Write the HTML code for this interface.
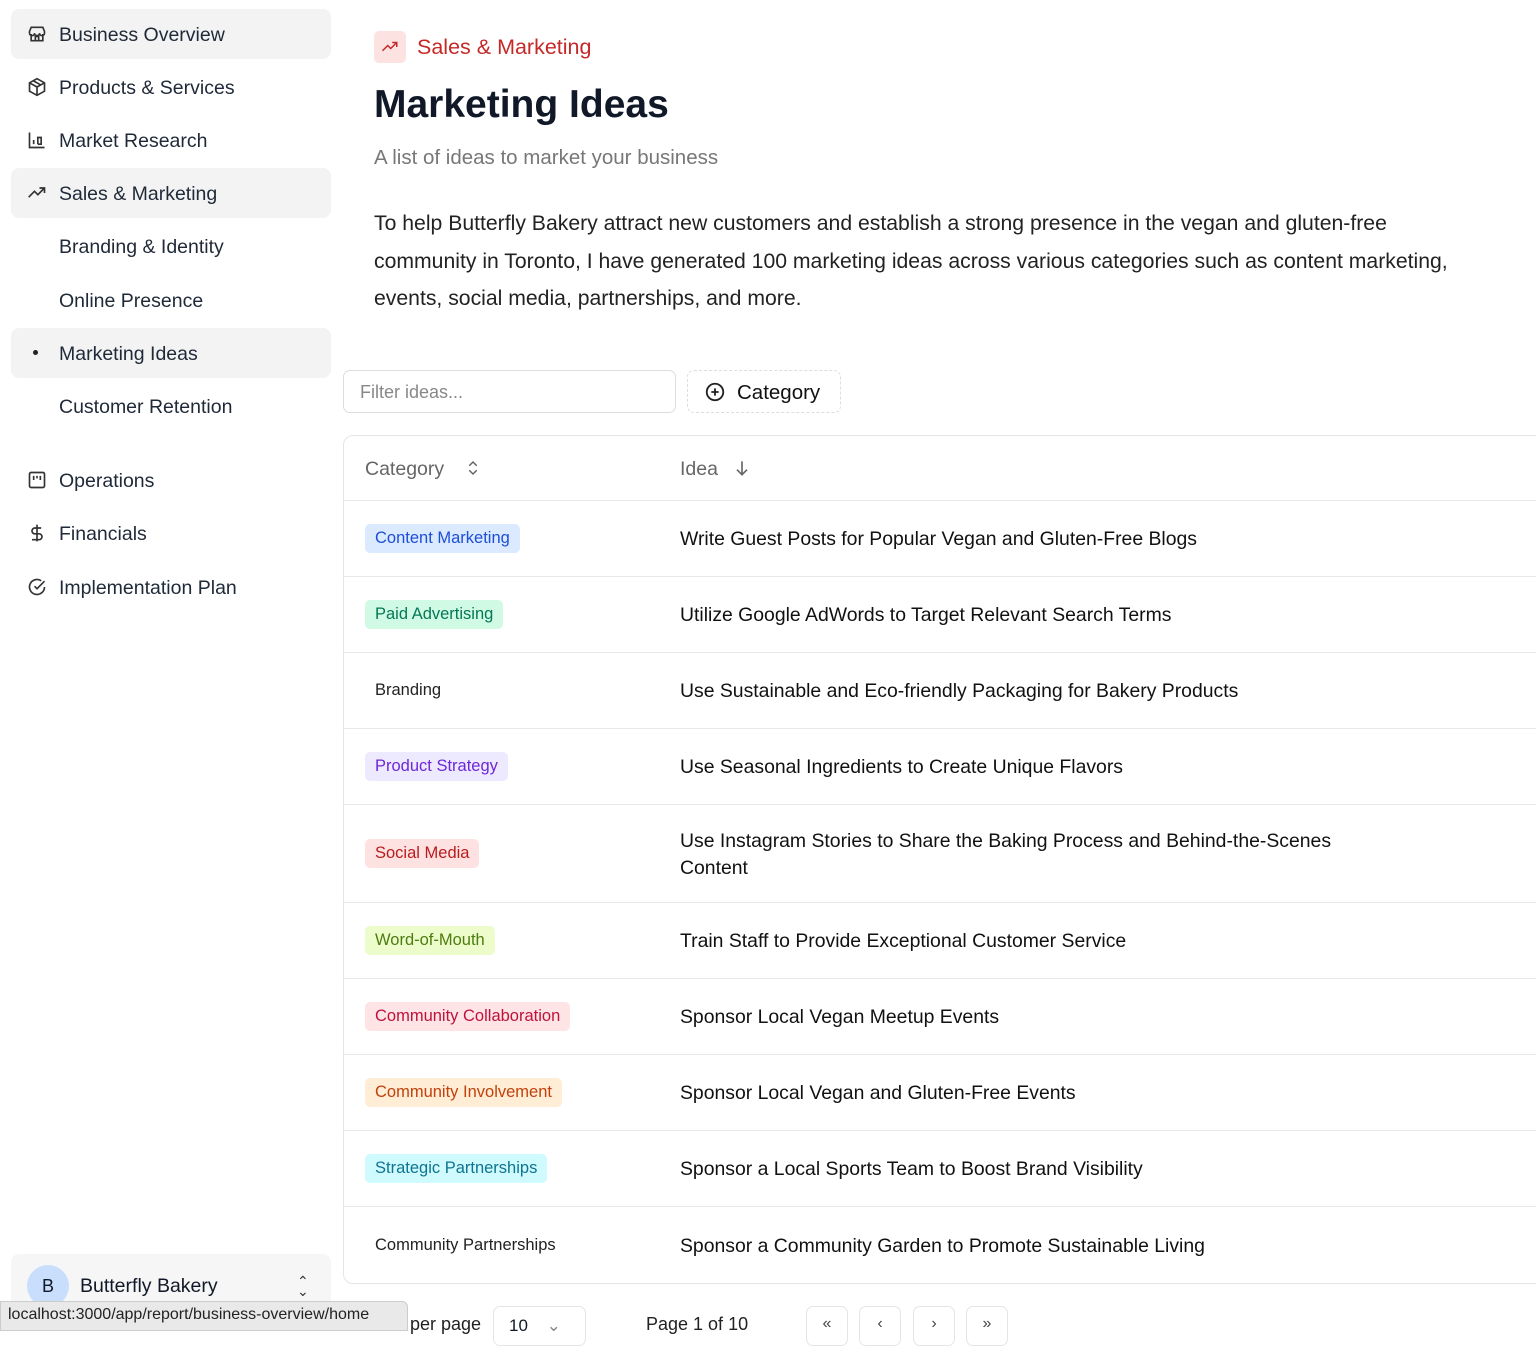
<!DOCTYPE html>
<html><head><meta charset="utf-8"><style>
*{box-sizing:border-box;margin:0;padding:0}
body{width:1536px;height:1329px;overflow:hidden;background:#fff;font-family:"Liberation Sans",sans-serif;color:#111827;position:relative}
.a{position:absolute}
.nav{position:absolute;left:11px;width:320px;height:50px;border-radius:8px;font-size:19.5px;color:#1f2937;display:flex;align-items:center;padding-left:48px;padding-top:3px}
.nav.hl{background:#f3f3f3}
.nav svg{position:absolute;left:16px;top:15px}
.row{position:absolute;left:343px;width:1200px;border-top:1px solid #e8e8e8;display:flex;align-items:center}
.cat{position:absolute;left:22px;font-size:16.5px;padding:5px 10px;border-radius:5px}
.idea{position:absolute;left:337px;font-size:19.4px;color:#111;line-height:27px;padding-top:2px}
.pg{position:absolute;top:1306px;width:42px;height:40px;border:1px solid #e5e5e5;border-radius:7px;text-align:center;font-size:16px;color:#444;padding-top:8px}
</style></head><body>

<div class="nav hl" style="top:9px"><svg width="20" height="20" viewBox="0 0 24 24" fill="none" stroke="#333" stroke-width="2"><path d="M3 9l2-5h14l2 5v2a3 3 0 01-6 0 3 3 0 01-6 0 3 3 0 01-6 0zM5 12v8h14v-8M10 20v-5h4v5"/></svg>Business Overview</div>
<div class="nav" style="top:62px"><svg width="20" height="20" viewBox="0 0 24 24" fill="none" stroke="#333" stroke-width="2"><path d="M12 2l9 5v10l-9 5-9-5V7zM3 7l9 5 9-5M12 12v10M7.5 4.5l9 5"/></svg>Products &amp; Services</div>
<div class="nav" style="top:115px"><svg width="20" height="20" viewBox="0 0 24 24" fill="none" stroke="#333" stroke-width="2"><path d="M3 3v18h18M8 17v-5M13 17V9h4v8h-4"/></svg>Market Research</div>
<div class="nav hl" style="top:168px"><svg width="20" height="20" viewBox="0 0 24 24" fill="none" stroke="#333" stroke-width="2"><path d="M2 17l7-7 4 4 8-8M15 6h6v6"/></svg>Sales &amp; Marketing</div>
<div class="nav" style="top:221px">Branding &amp; Identity</div>
<div class="nav" style="top:275px">Online Presence</div>
<div class="nav hl" style="top:328px"><span class="a" style="left:22px;top:22px;width:5px;height:5px;border-radius:50%;background:#222"></span>Marketing Ideas</div>
<div class="nav" style="top:381px">Customer Retention</div>
<div class="nav" style="top:455px"><svg width="20" height="20" viewBox="0 0 24 24" fill="none" stroke="#333" stroke-width="2"><rect x="3" y="3" width="18" height="18" rx="2"/><path d="M8 7v5M12 7v3M16 7v5"/></svg>Operations</div>
<div class="nav" style="top:508px"><svg width="20" height="20" viewBox="0 0 24 24" fill="none" stroke="#333" stroke-width="2"><path d="M12 2v20M17 6H9.5a3.5 3.5 0 000 7h5a3.5 3.5 0 010 7H6"/></svg>Financials</div>
<div class="nav" style="top:562px"><svg width="20" height="20" viewBox="0 0 24 24" fill="none" stroke="#333" stroke-width="2"><path d="M21 12a9 9 0 11-4-7.5M9 11l3 3 9-9"/></svg>Implementation Plan</div>

<div class="a" style="left:11px;top:1254px;width:320px;height:64px;background:#f6f6f6;border-radius:8px"></div>
<div class="a" style="left:27px;top:1265px;width:42px;height:42px;border-radius:50%;background:#c9defc;font-size:18px;text-align:center;padding-top:11px">B</div>
<div class="a" style="left:80px;top:1275px;font-size:19.5px">Butterfly Bakery</div>
<div class="a" style="left:297px;top:1276px;font-size:14px;line-height:10px;color:#333">⌃<br>⌄</div>
<div class="a" style="left:0;top:1301px;width:408px;height:30px;background:#e9e9e9;border:1px solid #ccc;border-radius:0 6px 0 0;font-size:16px;color:#222;padding:4px 7px">localhost:3000/app/report/business-overview/home</div>

<div class="a" style="left:374px;top:31px;width:32px;height:32px;background:#fde2e2;border-radius:5px"><svg class="a" style="left:7px;top:7px" width="18" height="18" viewBox="0 0 24 24" fill="none" stroke="#c62828" stroke-width="2"><path d="M2 17l7-7 4 4 8-8M15 6h6v6"/></svg></div>
<div class="a" style="left:417px;top:35px;font-size:21.5px;color:#c62828">Sales &amp; Marketing</div>
<div class="a" style="left:374px;top:83px;font-size:39px;font-weight:bold;color:#111827">Marketing Ideas</div>
<div class="a" style="left:374px;top:146px;font-size:20.5px;color:#777">A list of ideas to market your business</div>
<div class="a" style="left:374px;top:205px;width:1090px;font-size:21.2px;line-height:37.5px;color:#222">To help Butterfly Bakery attract new customers and establish a strong presence in the vegan and gluten-free community in Toronto, I have generated 100 marketing ideas across various categories such as content marketing, events, social media, partnerships, and more.</div>

<div class="a" style="left:343px;top:370px;width:333px;height:43px;border:1px solid #ddd;border-radius:7px;font-size:18px;color:#888;padding:11px 16px">Filter ideas...</div>
<div class="a" style="left:687px;top:370px;width:154px;height:43px;border:1px dashed #ddd;border-radius:7px;font-size:20.5px;color:#111;padding:10px 0 0 49px">Category<svg class="a" style="left:16px;top:10px" width="22" height="22" viewBox="0 0 24 24" fill="none" stroke="#222" stroke-width="2"><circle cx="12" cy="12" r="9"/><path d="M12 8v8M8 12h8"/></svg></div>

<div class="a" style="left:343px;top:435px;width:1210px;height:849px;border:1px solid #e5e5e5;border-radius:10px"></div>
<div class="a" style="left:365px;top:458px;font-size:19.5px;color:#666">Category</div>
<svg class="a" style="left:464px;top:458px" width="18" height="20" viewBox="0 0 24 24" fill="none" stroke="#666" stroke-width="2"><path d="M7 9l5-5 5 5M7 15l5 5 5-5"/></svg>
<div class="a" style="left:680px;top:458px;font-size:19.5px;color:#666">Idea</div>
<svg class="a" style="left:732px;top:458px" width="20" height="20" viewBox="0 0 24 24" fill="none" stroke="#666" stroke-width="2"><path d="M12 4v16M6 14l6 6 6-6"/></svg>

<div class="row" style="top:500px;height:76px"><span class="cat" style="background:#dbeafe;color:#1d4ed8">Content Marketing</span><span class="idea">Write Guest Posts for Popular Vegan and Gluten-Free Blogs</span></div>
<div class="row" style="top:576px;height:76px"><span class="cat" style="background:#d1fae5;color:#047857">Paid Advertising</span><span class="idea">Utilize Google AdWords to Target Relevant Search Terms</span></div>
<div class="row" style="top:652px;height:76px"><span class="cat" style="color:#222">Branding</span><span class="idea">Use Sustainable and Eco-friendly Packaging for Bakery Products</span></div>
<div class="row" style="top:728px;height:76px"><span class="cat" style="background:#ede9fe;color:#6d28d9">Product Strategy</span><span class="idea">Use Seasonal Ingredients to Create Unique Flavors</span></div>
<div class="row" style="top:804px;height:98px"><span class="cat" style="background:#fee2e2;color:#b91c1c">Social Media</span><span class="idea">Use Instagram Stories to Share the Baking Process and Behind-the-Scenes<br>Content</span></div>
<div class="row" style="top:902px;height:76px"><span class="cat" style="background:#ecfccb;color:#4d7c0f">Word-of-Mouth</span><span class="idea">Train Staff to Provide Exceptional Customer Service</span></div>
<div class="row" style="top:978px;height:76px"><span class="cat" style="background:#ffe4e6;color:#be123c">Community Collaboration</span><span class="idea">Sponsor Local Vegan Meetup Events</span></div>
<div class="row" style="top:1054px;height:76px"><span class="cat" style="background:#ffedd5;color:#c2410c">Community Involvement</span><span class="idea">Sponsor Local Vegan and Gluten-Free Events</span></div>
<div class="row" style="top:1130px;height:76px"><span class="cat" style="background:#cffafe;color:#0e7490">Strategic Partnerships</span><span class="idea">Sponsor a Local Sports Team to Boost Brand Visibility</span></div>
<div class="row" style="top:1206px;height:77px"><span class="cat" style="color:#222">Community Partnerships</span><span class="idea">Sponsor a Community Garden to Promote Sustainable Living</span></div>

<div class="a" style="left:410px;top:1314px;font-size:18px;color:#222">per page</div>
<div class="a" style="left:493px;top:1306px;width:93px;height:40px;border:1px solid #e5e5e5;border-radius:7px;font-size:17px;padding:9px 15px">10 <span style="margin-left:14px;color:#888">⌄</span></div>
<div class="a" style="left:646px;top:1314px;font-size:18px;color:#222">Page 1 of 10</div>
<div class="pg" style="left:806px">«</div>
<div class="pg" style="left:859px">‹</div>
<div class="pg" style="left:913px">›</div>
<div class="pg" style="left:966px">»</div>
</body></html>
